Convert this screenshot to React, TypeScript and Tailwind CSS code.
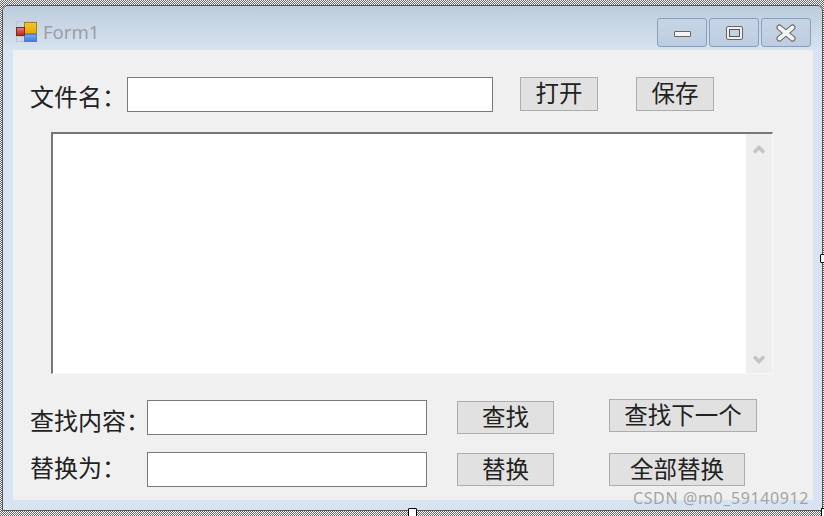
const cjk = "font-['Noto_Sans_CJK_SC',sans-serif]";

function FormButton({ label, className }: { label: string; className: string }) {
  return (
    <button className={`flex shrink-0 items-center justify-center whitespace-nowrap border border-[#adadad] bg-[#e1e1e1] pb-[2px] text-[23.5px] leading-none text-[#222] ${cjk} ${className}`}>
      {label}
    </button>
  );
}

function FormInput({ className }: { className: string }) {
  return <div className={`h-[35px] shrink-0 border border-[#7a7a7a] bg-white ${className}`} />;
}

function AppIcon() {
  return (
    <svg width="22" height="22" viewBox="0 0 22 22" className="shrink-0">
      <defs>
        <linearGradient id="yellow" x1="0" y1="0" x2="0" y2="1">
          <stop offset="0" stopColor="#f6c530" />
          <stop offset="1" stopColor="#e6a800" />
        </linearGradient>
        <linearGradient id="blue" x1="0" y1="0" x2="0" y2="1">
          <stop offset="0" stopColor="#7fa9f0" />
          <stop offset="1" stopColor="#3f78dc" />
        </linearGradient>
        <linearGradient id="red" x1="0" y1="0" x2="0" y2="1">
          <stop offset="0" stopColor="#e8837c" />
          <stop offset="1" stopColor="#b81f1c" />
        </linearGradient>
      </defs>
      <path d="M1.5.5h20v20h-20zM1.5 15.5h9M7 15v6" fill="none" stroke="#c2c4c6" />
      <rect x="9.5" y="1.5" width="12" height="11" fill="url(#yellow)" stroke="#a8821c" />
      <rect x="9.5" y="13.5" width="12" height="7" fill="url(#blue)" stroke="#4f7fc8" />
      <rect x="1.5" y="6.5" width="8" height="8" fill="url(#red)" stroke="#8e1f1c" />
    </svg>
  );
}

function CaptionButton({ children }: { children: React.ReactNode }) {
  return (
    <div className="flex h-[29px] w-[50px] items-center justify-center rounded-[3px] border border-[#8a9fbc] bg-gradient-to-b from-[#c8d5e5] to-[#bccde0]">
      {children}
    </div>
  );
}

export default function App() {
  return (
    <div className="relative h-[516px] w-[824px] overflow-hidden bg-[repeating-conic-gradient(#666_0_25%,#fff_0_50%)] bg-[length:2px_2px] pb-[5px] pl-[2px] pt-[5px]">
      <div className="flex h-full w-[821px] flex-col rounded-t-[6px] border border-[#555] bg-[#d8e4f1]">
        <div className="flex h-[44px] shrink-0 items-start justify-between rounded-t-[6px] bg-gradient-to-b from-[#bdccdc] to-[#d6e3f0] pl-[12px] pr-[11px] pt-[12px]">
          <div className="flex items-center gap-[6px] pt-[3px]">
            <AppIcon />
            <span className="font-['Noto_Sans',sans-serif] text-[18.5px] leading-none text-[#9a9ea4]">Form1</span>
          </div>
          <div className="flex gap-[2px]">
            <CaptionButton>
              <div className="mt-[2px] h-[6px] w-[17px] rounded-[1px] border border-[#666] bg-[#f4f4f4]" />
            </CaptionButton>
            <CaptionButton>
              <div className="h-[14px] w-[17px] rounded-[2px] border border-[#666] bg-[#f0f0f0] p-[2px]">
                <div className="h-full w-full border border-[#555] bg-[#c3d2e3]" />
              </div>
            </CaptionButton>
            <CaptionButton>
              <svg width="22" height="18" viewBox="0 0 22 18">
                <path d="M4.5 3.5l13 11M17.5 3.5l-13 11" fill="none" stroke="#666" strokeWidth="6" strokeLinecap="round" />
                <path d="M4.5 3.5l13 11M17.5 3.5l-13 11" fill="none" stroke="#f4f4f4" strokeWidth="4" strokeLinecap="round" />
              </svg>
            </CaptionButton>
          </div>
        </div>

        <div className="ml-[10px] flex h-[450px] w-[800px] shrink-0 flex-col bg-[#f0f0f0]">
          <div className={`flex pl-[17px] pt-[27px] ${cjk}`}>
            <span className="w-[97px] shrink-0 whitespace-nowrap pt-[4px] text-[24px] leading-[30px] text-[#222]">文件名：</span>
            <FormInput className="w-[366px]" />
            <FormButton label="打开" className="ml-[27px] h-[34px] w-[78px]" />
            <FormButton label="保存" className="ml-[38px] h-[34px] w-[78px]" />
          </div>

          <div className="ml-[38px] mt-[20px] flex h-[242px] w-[722px] shrink-0 border-b border-l-2 border-r border-t-2 border-b-[#f8f8f8] border-l-[#777] border-r-[#f8f8f8] border-t-[#777] bg-white">
            <div className="flex-1" />
            <div className="flex w-[26px] flex-col items-center justify-between bg-[#eeeeee] pb-[8px] pt-[10px]">
              <svg width="12" height="10" viewBox="0 0 12 10"><path d="M1 8.5l5-5 5 5" fill="none" stroke="#c4c4c4" strokeWidth="3.4" /></svg>
              <svg width="12" height="10" viewBox="0 0 12 10"><path d="M1 1.5l5 5 5-5" fill="none" stroke="#c4c4c4" strokeWidth="3.4" /></svg>
            </div>
          </div>

          <div className={`mt-[26px] flex pl-[17px] ${cjk}`}>
            <span className="w-[117px] shrink-0 whitespace-nowrap pt-[5px] text-[24px] leading-[30px] text-[#222]">查找内容：</span>
            <FormInput className="w-[280px]" />
            <FormButton label="查找" className="ml-[30px] mt-[1px] h-[33px] w-[97px]" />
            <FormButton label="查找下一个" className="ml-[55px] mt-[-1px] h-[33px] w-[148px]" />
          </div>

          <div className={`mt-[17px] flex pl-[17px] ${cjk}`}>
            <span className="w-[117px] shrink-0 whitespace-nowrap text-[24px] leading-[29px] text-[#222]">替换为：</span>
            <FormInput className="w-[280px]" />
            <FormButton label="替换" className="ml-[30px] mt-[1px] h-[33px] w-[97px]" />
            <FormButton label="全部替换" className="ml-[55px] mt-[1px] h-[33px] w-[136px]" />
          </div>
        </div>
      </div>

      <span className="absolute left-[633px] top-[488px] whitespace-nowrap font-['Noto_Sans',sans-serif] text-[16px] leading-[20px] tracking-[0.6px] text-[#a4a4a4]">CSDN @m0_59140912</span>
      <div className="absolute left-[820px] top-[254px] h-[9px] w-[6px] rounded-[1px] border border-black bg-white" />
      <div className="absolute left-[408px] top-[508px] h-[9px] w-[9px] rounded-[1px] border border-black bg-white" />
      <div className="absolute left-[821px] top-[508px] h-[9px] w-[4px] border-l border-t border-black bg-white" />
    </div>
  );
}
